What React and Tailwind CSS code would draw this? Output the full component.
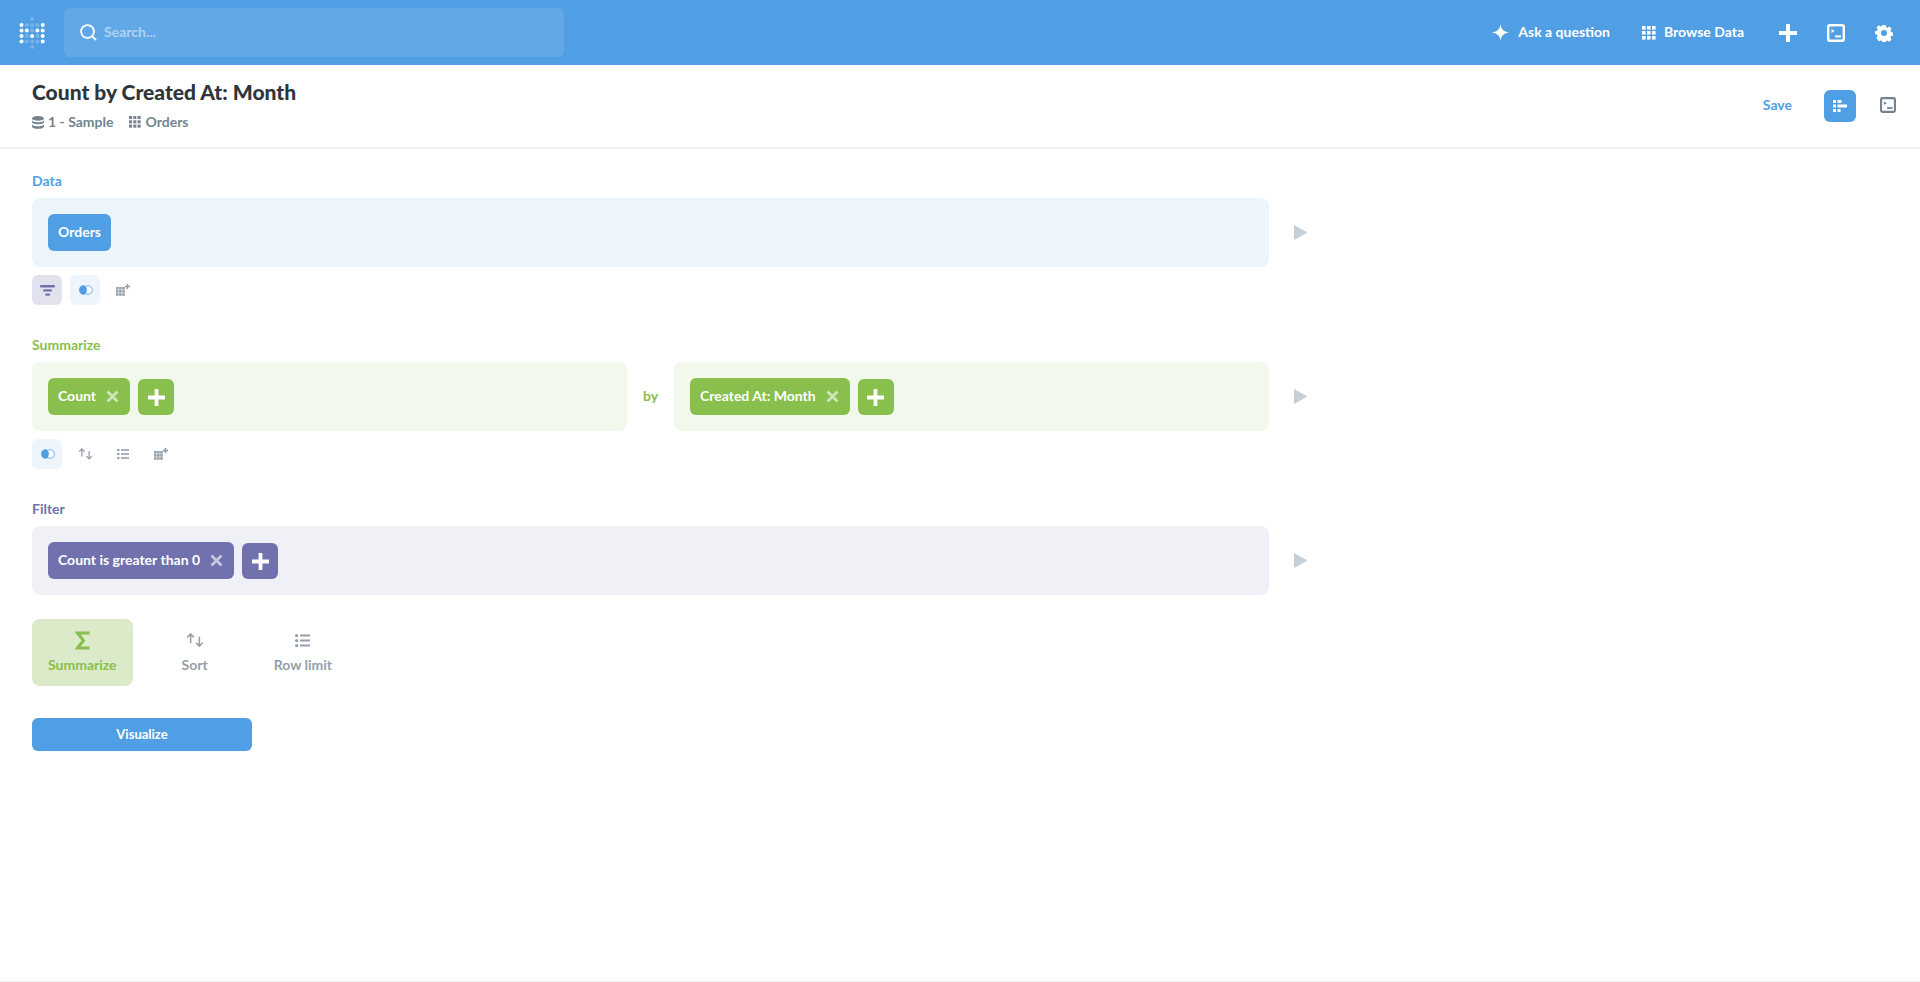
import React from "react";

const BRAND = "#509EE3";

// metabase logo, dots read off the reference
const LOGO_ROWS = [
  { y: 4, dots: [[2, 0]] },
  { y: 10, dots: [[0, 1], [1, 0], [2, 0], [3, 0], [4, 1]] },
  { y: 15.6, dots: [[0, 1], [1, 1], [2, 0], [3, 1], [4, 1]] },
  { y: 21, dots: [[0, 1], [1, 0], [2, 1], [3, 0], [4, 1]] },
  { y: 26.4, dots: [[0, 1], [1, 0], [2, 0], [3, 0], [4, 1]] },
  { y: 32, dots: [[2, 0]] },
];

const Logo = () => (
  <svg width="32" height="36" viewBox="0 0 32 36" className="shrink-0">
    {LOGO_ROWS.map((row) =>
      row.dots.map(([col, on]) => (
        <circle
          key={`${row.y}-${col}`}
          cx={5.5 + col * 5.3}
          cy={row.y}
          r="2"
          fill="#fff"
          fillOpacity={on ? 1 : 0.22}
        />
      ))
    )}
  </svg>
);

const GridIcon = ({ size = 14, color = "currentColor" }) => (
  <svg width={size} height={size} viewBox="0 0 14 14" fill={color} className="shrink-0">
    {[0, 5, 10].map((y) =>
      [0, 5, 10].map((x) => <rect key={`${x}-${y}`} x={x} y={y} width="3.6" height="3.6" />)
    )}
  </svg>
);

const GridPlusIcon = ({ color = "#949FA9" }) => (
  <svg width="14" height="12" viewBox="0 0 14 12" fill={color} className="shrink-0">
    {[3, 6.1, 9.2].map((y) =>
      [0, 3.1, 6.2].map((x) => <rect key={`${x}-${y}`} x={x} y={y} width="2.6" height="2.6" />)
    )}
    <rect x="10.600" y="0" width="1.600" height="5" />
    <rect x="9" y="1.700" width="5" height="1.600" />
  </svg>
);

const TerminalIcon = ({ size = 18, color = "currentColor" }) => (
  <svg width={size} height={size} viewBox="0 0 18 18" fill="none" className="shrink-0">
    <rect x="1.200" y="1.200" width="15.600" height="15.600" rx="1.500" stroke={color} strokeWidth="2.400" />
    <path d="M4.500 5l3.200 2-3.200 2z" fill={color} />
    <rect x="8" y="11.400" width="6" height="2" fill={color} />
  </svg>
);

const PlusIcon = ({ size = 18, color = "#fff" }) => (
  <svg width={size} height={size} viewBox="0 0 18 18" fill={color} className="shrink-0">
    <path d="M7 0h4v7h7v4h-7v7H7v-7H0V7h7z" />
  </svg>
);

const CloseIcon = () => (
  <svg width="13" height="13" viewBox="0 0 13 13" className="ml-[10px] mt-[2px] shrink-0">
    <path d="M1.500 1.500l10 10M11.500 1.500l-10 10" stroke="#fff" strokeOpacity="0.6" strokeWidth="2.800" />
  </svg>
);

const GearIcon = () => (
  <svg width="18" height="18" viewBox="0 0 24 24" fill="#fff" className="shrink-0">
    <path
      fillRule="evenodd"
      d="M9.600 0h4.800l.7 3.300 2 .8 2.800-1.800 3.400 3.400-1.800 2.800.8 2 3.200.7v4.800l-3.300.7-.8 2 1.800 2.800-3.400 3.400-2.800-1.800-2 .8-.6 3.100H9.600l-.7-3.300-2-.8-2.800 1.800L.7 19.200l1.800-2.800-.8-2-3.200-.7V9.300l3.300-.7.8-2-1.800-2.800L4.200.4 7 2.200l2-.8zM12 7.600a4.400 4.400 0 100 8.800 4.400 4.400 0 000-8.800z"
      transform="translate(1.200 1.200) scale(0.9)"
    />
  </svg>
);

const SortIcon = ({ width = 14, color = "#949FA9" }) => (
  <svg width={width} height={(width * 11) / 14} viewBox="0 0 14 11" fill="none" stroke={color} strokeWidth="1.200" className="shrink-0">
    <path d="M3.600 8V1M1 3.400l2.600-2.600 2.600 2.600" />
    <path d="M10.400 3v7M7.800 7.600l2.600 2.600 2.600-2.600" />
  </svg>
);

const ListIcon = ({ width = 12, color = "#949FA9" }) => (
  <svg width={width} height={width} viewBox="0 0 12 12" fill={color} className="shrink-0">
    <circle cx="1.300" cy="2" r="1.300" />
    <circle cx="1.300" cy="6" r="1.300" />
    <circle cx="1.300" cy="10" r="1.300" />
    <rect x="4" y="1.200" width="8" height="1.600" />
    <rect x="4" y="5.200" width="8" height="1.600" />
    <rect x="4" y="9.200" width="8" height="1.600" />
  </svg>
);

const JoinIcon = () => (
  <svg width="15" height="10" viewBox="0 0 15 10" className="shrink-0">
    <circle cx="10" cy="5" r="4.300" fill="#fff" stroke={BRAND} strokeWidth="0.800" />
    <path d="M6.700 .4a4.700 4.700 0 100 9.200 6 6 0 000-9.200z" fill={BRAND} />
  </svg>
);

const FilterIcon = () => (
  <svg width="15" height="11" viewBox="0 0 15 11" fill="#7172AD" className="shrink-0">
    <rect x="0" y="0" width="15" height="2.600" rx="1.200" />
    <rect x="3" y="4.200" width="9" height="2.400" rx="1.200" />
    <rect x="5.200" y="8.400" width="5" height="2.400" rx="1.200" />
  </svg>
);

const RunArrow = () => (
  <button className="ml-[25px] shrink-0">
    <svg width="14" height="15" viewBox="0 0 14 15" fill="#C6CFD8" className="block">
      <path d="M0 0l13.500 7.500L0 15z" />
    </svg>
  </button>
);

const Chip = ({ label, color, closable = true }) => (
  <button
    className={`flex h-[37px] items-center rounded-md pb-[2px] pl-[10px] text-sm font-bold text-white ${
      closable ? "pr-[11px]" : "pr-[10px]"
    }`}
    style={{ backgroundColor: color }}
  >
    {label}
    {closable && <CloseIcon />}
  </button>
);

const AddChip = ({ color }) => (
  <button
    className="flex h-[36px] w-[36px] items-center justify-center rounded-md"
    style={{ backgroundColor: color }}
  >
    <PlusIcon size={17} />
  </button>
);

const ActionButton = ({ bg, children }) => (
  <button
    className="flex h-[30px] w-[30px] items-center justify-center rounded-md"
    style={{ backgroundColor: bg }}
  >
    {children}
  </button>
);

const SectionLabel = ({ color, children }) => (
  <div className="mb-[9px] h-[17px] text-sm leading-[17px] font-bold" style={{ color }}>
    {children}
  </div>
);

const Cell = ({ bg, className = "", children }) => (
  <div
    className={`flex h-[69px] items-center rounded-lg pl-4 ${className}`}
    style={{ backgroundColor: bg }}
  >
    <div className="flex items-end gap-2">{children}</div>
  </div>
);

const BigAction = ({ icon, label, active, className = "" }) => (
  <button
    className={`flex h-[67px] flex-col items-center rounded-lg px-4 pt-[11px] text-sm font-bold ${
      active ? "bg-[#DBEAC8] text-[#88BF4D]" : "text-[#949FA9]"
    } ${className}`}
  >
    <div className="flex h-[20px] items-center justify-center">{icon}</div>
    <div className="mt-[6px] leading-[17px]">{label}</div>
  </button>
);

export default function App() {
  return (
    <div className="flex min-h-[982px] flex-col border-b border-[#F0F0F0] bg-white [font-family:Lato,sans-serif]">
      <nav className="flex h-[65px] items-center bg-[#509EE3] text-white">
        <div className="flex w-[64px] justify-center">
          <Logo />
        </div>
        <div className="flex h-[49px] w-[500px] items-center rounded-md bg-[#62A8E6] pl-4">
          <svg width="17" height="17" viewBox="0 0 17 17" fill="none" stroke="#fff" strokeWidth="1.800" className="shrink-0">
            <circle cx="7.500" cy="7.500" r="6.400" />
            <path d="M12 12l4 4" />
          </svg>
          <span className="mb-[2px] ml-[7px] text-sm font-bold text-white/50">Search...</span>
        </div>
        <div className="ml-auto flex items-center pr-[27px]">
          <svg width="17" height="17" viewBox="0 0 17 17" fill="#fff" className="shrink-0">
            <path d="M8.500 0c.7 5.200 2.800 7.500 8.500 8.500-5.700 1-7.800 3.300-8.500 8.500-.7-5.200-2.800-7.500-8.500-8.500 5.700-1 7.800-3.300 8.500-8.500z" />
          </svg>
          <span className="mb-[2px] ml-[9px] text-sm font-bold">Ask a question</span>
          <span className="ml-[32px]">
            <GridIcon />
          </span>
          <span className="mb-[2px] ml-[8px] text-sm font-bold">Browse Data</span>
          <span className="ml-[35px]">
            <PlusIcon size={18} />
          </span>
          <span className="ml-[30px]">
            <TerminalIcon />
          </span>
          <span className="ml-[30px]">
            <GearIcon />
          </span>
        </div>
      </nav>

      <header className="flex h-[84px] items-start justify-between border-b-2 border-[#F0F0F0] pl-8 pr-6">
        <div className="pt-[14px]">
          <h1 className="text-[21px] leading-[26px] font-black text-[#2E353B]">Count by Created At: Month</h1>
          <div className="mt-[7px] flex items-center text-sm font-bold text-[#74838F]">
            <svg width="12" height="13" viewBox="0 0 12 13" fill="#74838F" className="shrink-0">
              <ellipse cx="6" cy="2.400" rx="6" ry="2.400" />
              <path d="M0 4v2c0 1.300 2.700 2.300 6 2.300S12 7.300 12 6V4c0 1.300-2.700 2.300-6 2.300S0 5.300 0 4z" />
              <path d="M0 8v2.400c0 1.400 2.700 2.400 6 2.400s6-1 6-2.400V8c0 1.300-2.700 2.300-6 2.300S0 9.300 0 8z" />
            </svg>
            <span className="ml-[4px]">1 - Sample</span>
            <span className="ml-[16px]">
              <GridIcon size={12} />
            </span>
            <span className="ml-[4px]">Orders</span>
          </div>
        </div>
        <div className="flex items-center pt-[25px]">
          <span className="mb-[2px] text-sm font-bold text-[#509EE3]">Save</span>
          <button className="ml-[32px] flex h-[32px] w-[32px] items-center justify-center rounded-md bg-[#509EE3]">
            <svg width="14" height="12" viewBox="0 0 14 12" fill="#fff">
              <rect x="0" y="0" width="3" height="3" />
              <rect x="4.500" y="0" width="4" height="3" />
              <rect x="0" y="4.500" width="3" height="3" />
              <rect x="4.500" y="4.500" width="9.500" height="3" />
              <rect x="0" y="9" width="3" height="3" />
              <rect x="4.500" y="9" width="3" height="3" />
            </svg>
          </button>
          <span className="mb-[2px] ml-[24px]">
            <TerminalIcon size={16} color="#74838F" />
          </span>
        </div>
      </header>

      <main className="pl-8 pt-[23px]">
        <section>
          <SectionLabel color="#509EE3">Data</SectionLabel>
          <div className="flex items-center">
            <Cell bg="#EDF5FC" className="w-[1237px]">
              <Chip label="Orders" color="#509EE3" closable={false} />
            </Cell>
            <RunArrow />
          </div>
          <div className="mt-2 flex gap-2">
            <ActionButton bg="#E2E2EE">
              <FilterIcon />
            </ActionButton>
            <ActionButton bg="#EEF5FD">
              <JoinIcon />
            </ActionButton>
            <ActionButton bg="transparent">
              <GridPlusIcon />
            </ActionButton>
          </div>
        </section>

        <section className="mt-[31px]">
          <SectionLabel color="#88BF4D">Summarize</SectionLabel>
          <div className="flex items-center">
            <Cell bg="#F3F8ED" className="w-[595px]">
              <Chip label="Count" color="#88BF4D" />
              <AddChip color="#88BF4D" />
            </Cell>
            <div className="mb-[2px] w-[47px] text-center text-sm font-bold text-[#88BF4D]">by</div>
            <Cell bg="#F3F8ED" className="w-[595px]">
              <Chip label="Created At: Month" color="#88BF4D" />
              <AddChip color="#88BF4D" />
            </Cell>
            <RunArrow />
          </div>
          <div className="mt-2 flex gap-2">
            <ActionButton bg="#EEF5FD">
              <JoinIcon />
            </ActionButton>
            <ActionButton bg="transparent">
              <SortIcon width={15} />
            </ActionButton>
            <ActionButton bg="transparent">
              <ListIcon />
            </ActionButton>
            <ActionButton bg="transparent">
              <GridPlusIcon />
            </ActionButton>
          </div>
        </section>

        <section className="mt-[31px]">
          <SectionLabel color="#7172AD">Filter</SectionLabel>
          <div className="flex items-center">
            <Cell bg="#F0F1F6" className="w-[1237px]">
              <Chip label="Count is greater than 0" color="#7172AD" />
              <AddChip color="#7172AD" />
            </Cell>
            <RunArrow />
          </div>
        </section>

        <div className="mt-[24px] flex gap-[33px]">
          <BigAction
            active
            label="Summarize"
            icon={
              <svg width="15" height="19" viewBox="0 0 15 19" fill="none" stroke="#88BF4D" strokeWidth="3">
                <path d="M14.500 2H2.500l6 7.500-6 7.500h12" />
              </svg>
            }
          />
          <BigAction label="Sort" icon={<SortIcon width={18} />} />
          <BigAction label="Row limit" icon={<ListIcon width={15} />} className="ml-px" />
        </div>

        <button className="mt-[32px] h-[33px] w-[220px] rounded-md bg-[#509EE3] text-[13px] font-bold text-white">
          Visualize
        </button>
      </main>
    </div>
  );
}
